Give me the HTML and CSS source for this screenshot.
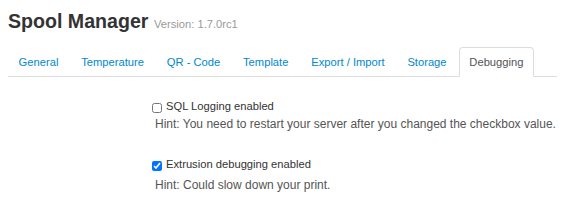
FILE: index.html
```html
<!DOCTYPE html>
<html lang="en">

<head>
  <meta charset="UTF-8">
  <title>Spool Manager</title>
  <link rel="stylesheet" href="styles.css">
</head>

<body>
  <h3 class="title">Spool Manager <small>Version: 1.7.0rc1</small></h3>

  <ul class="nav-tabs">
    <li><a href="#">General</a></li>
    <li><a href="#">Temperature</a></li>
    <li><a href="#">QR - Code</a></li>
    <li><a href="#">Template</a></li>
    <li><a href="#">Export / Import</a></li>
    <li><a href="#">Storage</a></li>
    <li class="active"><a href="#">Debugging</a></li>
  </ul>

  <div class="tab-content">
    <div class="controls">
      <label class="checkbox"><input type="checkbox"> SQL Logging enabled</label>
      <div class="hint">Hint: You need to restart your server after you changed the checkbox value.</div>
    </div>
    <div class="controls">
      <label class="checkbox"><input type="checkbox" checked> Extrusion debugging enabled</label>
      <div class="hint hint-spaced">Hint: Could slow down your print.</div>
    </div>
  </div>
</body>

</html>
```

FILE: styles.css
```css
body {
  margin: 0;
  padding: 0 8px;
  font-family: "Liberation Sans", Arial, sans-serif;
  font-size: 11.2px;
  line-height: 16px;
  color: #333;
  background: #fff;
}

.title {
  margin: 5px 0 0;
  font-size: 19.6px;
  line-height: 32px;
  font-weight: bold;
}

.title small {
  font-size: 11.2px;
  font-weight: normal;
  color: #999;
}

.nav-tabs {
  display: flex;
  margin: 7px 0 0;
  padding: 0;
  list-style: none;
  border-bottom: 1px solid #ddd;
}

.nav-tabs li {
  margin-bottom: -1px;
  margin-right: 1.6px;
}

.nav-tabs a {
  display: block;
  padding: 6px 9.6px;
  line-height: 16px;
  border: 1px solid transparent;
  border-radius: 4px 4px 0 0;
  color: #0088cc;
  text-decoration: none;
}

.nav-tabs .active a {
  color: #555;
  background: #fff;
  border-color: #ddd;
  border-bottom-color: transparent;
}

.tab-content {
  padding-top: 21px;
}

.controls {
  margin-left: 144px;
  margin-bottom: 24px;
}

.checkbox {
  display: flex;
  align-items: flex-start;
}

.checkbox input {
  width: 10px;
  height: 10px;
  margin: 4.5px 4px 0 0;
}

.hint {
  margin: 2px 0 0 3px;
  font-size: 12px;
  color: #555;
}

.hint-spaced {
  margin-top: 5px;
}
```
